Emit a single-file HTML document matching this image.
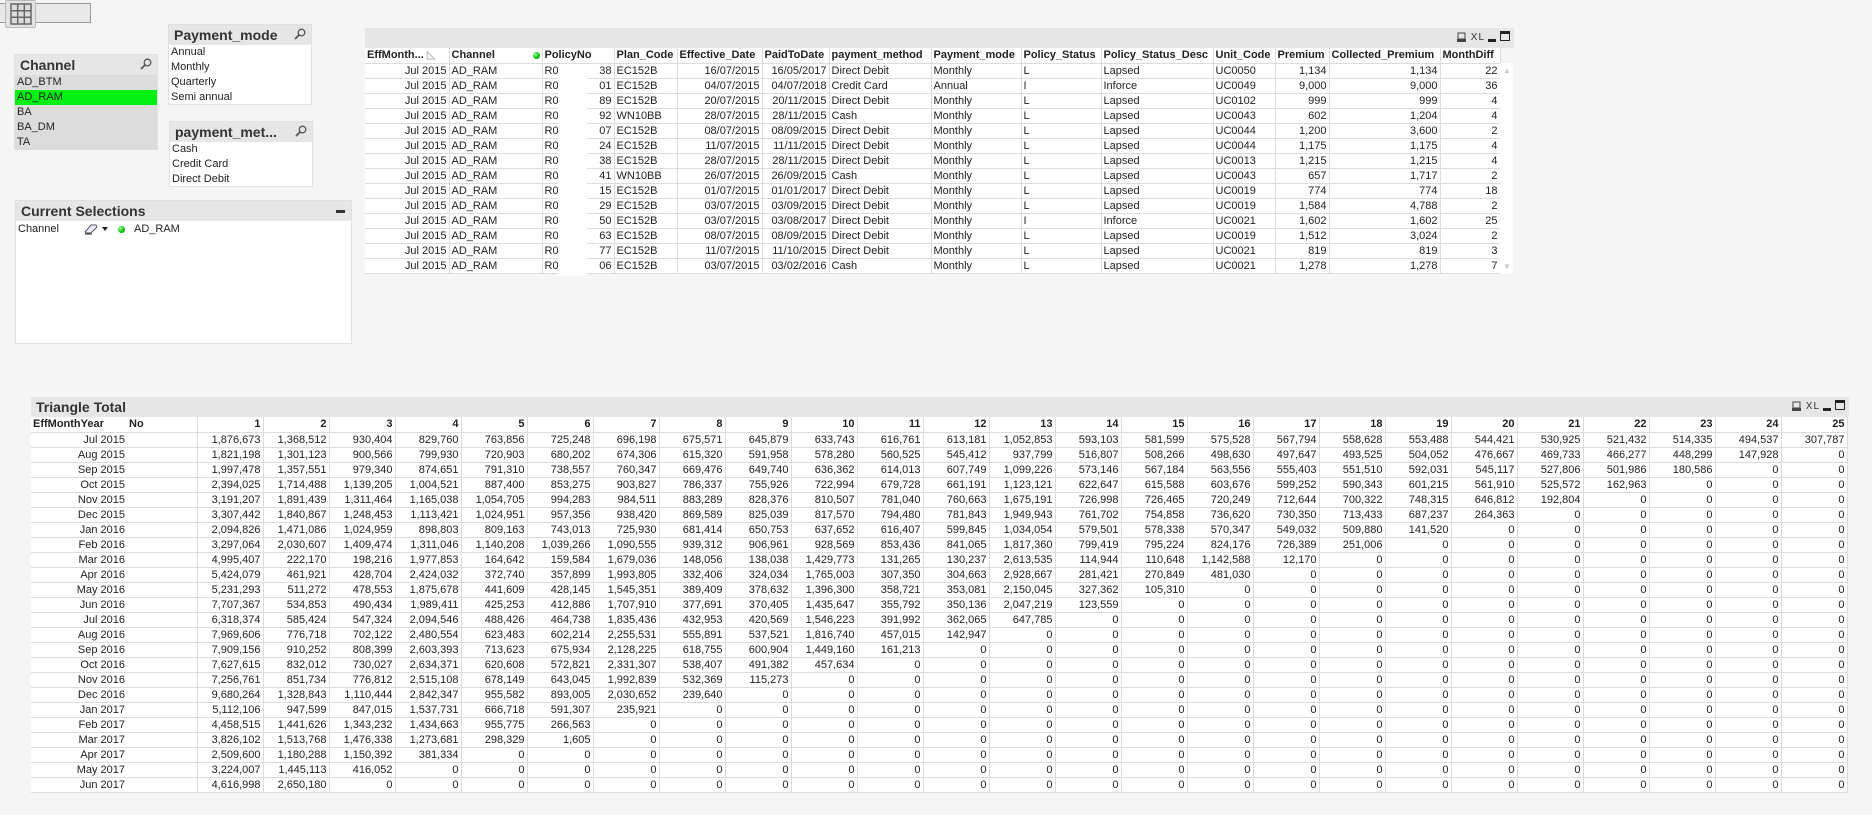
<!DOCTYPE html>
<html><head><meta charset="utf-8"><style>
*{box-sizing:border-box;margin:0;padding:0}
body{width:1872px;height:815px;background:#f5f5f5;font-family:"Liberation Sans",Tahoma,sans-serif;font-size:11px;color:#222;position:relative;overflow:hidden}
.abs{position:absolute}
.hdr{position:absolute;left:0;right:0;top:0;height:20px;background:#e6e6e6;font-weight:bold;font-size:14px;color:#333;padding:2px 5px;white-space:nowrap;overflow:hidden}
.lb{background:#fff;border:1px solid #e0e0e0}
.lb .it{height:15px;line-height:15px;padding-left:2px;white-space:nowrap}
.srch{position:absolute;right:5px;top:3px;width:12px;height:12px}
table{border-collapse:collapse;table-layout:fixed;position:absolute}
td{height:15px;line-height:14px;padding:0 2px;white-space:nowrap;overflow:hidden;border-right:1px solid #dcdcdc;border-bottom:1px solid #dcdcdc;background:#fff}
th{height:15px;line-height:14px;padding:0 2px;white-space:nowrap;overflow:hidden;font-weight:bold;text-align:left;border-right:1px solid #dcdcdc;border-bottom:1px solid #dcdcdc;background:#fff}
.tri td{text-align:right}
.tri td:first-child{text-align:right;border-right:none}
.tri th{text-align:right}
</style></head><body>

<div class="abs" style="left:0;top:3px;width:91px;height:20px;background:#e8e8e8;border:1px solid #9a9a9a;border-left:none"></div>
<div class="abs" style="left:5px;top:0;width:31px;height:28px;background:#e2e2e2;border:1px solid #bbb;border-radius:2px">
<svg width="22" height="22" style="position:absolute;left:4px;top:2px" viewBox="0 0 22 22"><rect x="1" y="1" width="20" height="20" fill="#ddd" stroke="#666" stroke-width="1.5"/><path d="M1 7.7H21M1 14.3H21M7.7 1V21M14.3 1V21" stroke="#666" stroke-width="1.5"/></svg>
</div>

<div class="abs lb" style="left:14px;top:54px;width:144px;height:96px;background:#dcdcdc">
<div class="hdr" style="background:#e6e6e6">Channel</div>
<svg class="srch" viewBox="0 0 12 12"><circle cx="7.5" cy="4.5" r="3.3" fill="none" stroke="#555" stroke-width="1.3"/><path d="M5 7L1 11" stroke="#555" stroke-width="1.8"/></svg>
<div style="position:absolute;top:20px;left:0;right:0">
<div class="it" style="background:#dcdcdc">AD_BTM</div>
<div class="it" style="background:#00f010">AD_RAM</div>
<div class="it" style="background:#dcdcdc">BA</div>
<div class="it" style="background:#dcdcdc">BA_DM</div>
<div class="it" style="background:#dcdcdc">TA</div>
</div></div>

<div class="abs lb" style="left:168px;top:24px;width:144px;height:81px">
<div class="hdr">Payment_mode</div>
<svg class="srch" viewBox="0 0 12 12"><circle cx="7.5" cy="4.5" r="3.3" fill="none" stroke="#555" stroke-width="1.3"/><path d="M5 7L1 11" stroke="#555" stroke-width="1.8"/></svg>
<div style="position:absolute;top:20px;left:0;right:0">
<div class="it">Annual</div><div class="it">Monthly</div><div class="it">Quarterly</div><div class="it">Semi annual</div>
</div></div>

<div class="abs lb" style="left:169px;top:121px;width:144px;height:66px">
<div class="hdr">payment_met...</div>
<svg class="srch" viewBox="0 0 12 12"><circle cx="7.5" cy="4.5" r="3.3" fill="none" stroke="#555" stroke-width="1.3"/><path d="M5 7L1 11" stroke="#555" stroke-width="1.8"/></svg>
<div style="position:absolute;top:20px;left:0;right:0">
<div class="it">Cash</div><div class="it">Credit Card</div><div class="it">Direct Debit</div>
</div></div>

<div class="abs lb" style="left:15px;top:200px;width:337px;height:144px">
<div class="hdr">Current Selections</div>
<div class="abs" style="right:6px;top:9px;width:9px;height:3px;background:#333"></div>
<div class="abs" style="left:2px;top:22px">Channel</div>
<svg class="abs" style="left:67px;top:22px" width="16" height="12" viewBox="0 0 16 12"><path d="M2 9L8 2L13 2L14 4L8 10L3 10Z" fill="#eef" stroke="#556" stroke-width="1"/><path d="M2 11H9" stroke="#333"/></svg>
<div class="abs" style="left:86px;top:26px;width:0;height:0;border-left:3px solid transparent;border-right:3px solid transparent;border-top:4px solid #222"></div>
<div class="abs" style="left:102px;top:25px;width:7px;height:7px;border-radius:50%;background:radial-gradient(circle at 35% 35%,#9f9,#0b0 60%,#070)"></div>
<div class="abs" style="left:118px;top:22px">AD_RAM</div>
</div>

<div class="abs" style="left:365px;top:28px;width:1149px;height:20px;background:#e6e6e6"></div>
<div class="abs" style="left:1456px;top:31px;font-size:10px;color:#333;letter-spacing:1px">
<svg width="11" height="11" viewBox="0 0 11 11" style="vertical-align:middle"><rect x="2" y="1" width="7" height="6" fill="none" stroke="#444"/><rect x="1" y="7" width="9" height="3" fill="#444"/></svg> XL
<span style="display:inline-block;width:8px;height:3px;background:#222;vertical-align:-2px"></span>
<span style="display:inline-block;width:10px;height:10px;border:1px solid #222;border-top:3px solid #222;vertical-align:-1px"></span>
</div>
<table class="abs" style="left:365px;top:48px;width:1135px">
<colgroup><col style="width:84px"><col style="width:93px"><col style="width:72px"><col style="width:63px"><col style="width:85px"><col style="width:67px"><col style="width:102px"><col style="width:90px"><col style="width:80px"><col style="width:112px"><col style="width:62px"><col style="width:54px"><col style="width:111px"><col style="width:60px"></colgroup>
<tr><th>EffMonth... <span style="color:#bbb">◺</span></th><th>Channel <span style="float:right;display:inline-block;width:7px;height:7px;margin-top:4px;border-radius:50%;background:radial-gradient(circle at 35% 35%,#9f9,#0b0 60%,#070)"></span></th><th>PolicyNo</th><th>Plan_Code</th><th>Effective_Date</th><th>PaidToDate</th><th>payment_method</th><th>Payment_mode</th><th>Policy_Status</th><th>Policy_Status_Desc</th><th>Unit_Code</th><th>Premium</th><th>Collected_Premium</th><th>MonthDiff</th></tr>
<tr><td align="right">Jul 2015</td><td>AD_RAM</td><td>R0<span style="float:right">38</span></td><td>EC152B</td><td align="right">16/07/2015</td><td align="right">16/05/2017</td><td>Direct Debit</td><td>Monthly</td><td>L</td><td>Lapsed</td><td>UC0050</td><td align="right">1,134</td><td align="right">1,134</td><td align="right">22</td></tr>
<tr><td align="right">Jul 2015</td><td>AD_RAM</td><td>R0<span style="float:right">01</span></td><td>EC152B</td><td align="right">04/07/2015</td><td align="right">04/07/2018</td><td>Credit Card</td><td>Annual</td><td>I</td><td>Inforce</td><td>UC0049</td><td align="right">9,000</td><td align="right">9,000</td><td align="right">36</td></tr>
<tr><td align="right">Jul 2015</td><td>AD_RAM</td><td>R0<span style="float:right">89</span></td><td>EC152B</td><td align="right">20/07/2015</td><td align="right">20/11/2015</td><td>Direct Debit</td><td>Monthly</td><td>L</td><td>Lapsed</td><td>UC0102</td><td align="right">999</td><td align="right">999</td><td align="right">4</td></tr>
<tr><td align="right">Jul 2015</td><td>AD_RAM</td><td>R0<span style="float:right">92</span></td><td>WN10BB</td><td align="right">28/07/2015</td><td align="right">28/11/2015</td><td>Cash</td><td>Monthly</td><td>L</td><td>Lapsed</td><td>UC0043</td><td align="right">602</td><td align="right">1,204</td><td align="right">4</td></tr>
<tr><td align="right">Jul 2015</td><td>AD_RAM</td><td>R0<span style="float:right">07</span></td><td>EC152B</td><td align="right">08/07/2015</td><td align="right">08/09/2015</td><td>Direct Debit</td><td>Monthly</td><td>L</td><td>Lapsed</td><td>UC0044</td><td align="right">1,200</td><td align="right">3,600</td><td align="right">2</td></tr>
<tr><td align="right">Jul 2015</td><td>AD_RAM</td><td>R0<span style="float:right">24</span></td><td>EC152B</td><td align="right">11/07/2015</td><td align="right">11/11/2015</td><td>Direct Debit</td><td>Monthly</td><td>L</td><td>Lapsed</td><td>UC0044</td><td align="right">1,175</td><td align="right">1,175</td><td align="right">4</td></tr>
<tr><td align="right">Jul 2015</td><td>AD_RAM</td><td>R0<span style="float:right">38</span></td><td>EC152B</td><td align="right">28/07/2015</td><td align="right">28/11/2015</td><td>Direct Debit</td><td>Monthly</td><td>L</td><td>Lapsed</td><td>UC0013</td><td align="right">1,215</td><td align="right">1,215</td><td align="right">4</td></tr>
<tr><td align="right">Jul 2015</td><td>AD_RAM</td><td>R0<span style="float:right">41</span></td><td>WN10BB</td><td align="right">26/07/2015</td><td align="right">26/09/2015</td><td>Cash</td><td>Monthly</td><td>L</td><td>Lapsed</td><td>UC0043</td><td align="right">657</td><td align="right">1,717</td><td align="right">2</td></tr>
<tr><td align="right">Jul 2015</td><td>AD_RAM</td><td>R0<span style="float:right">15</span></td><td>EC152B</td><td align="right">01/07/2015</td><td align="right">01/01/2017</td><td>Direct Debit</td><td>Monthly</td><td>L</td><td>Lapsed</td><td>UC0019</td><td align="right">774</td><td align="right">774</td><td align="right">18</td></tr>
<tr><td align="right">Jul 2015</td><td>AD_RAM</td><td>R0<span style="float:right">29</span></td><td>EC152B</td><td align="right">03/07/2015</td><td align="right">03/09/2015</td><td>Direct Debit</td><td>Monthly</td><td>L</td><td>Lapsed</td><td>UC0019</td><td align="right">1,584</td><td align="right">4,788</td><td align="right">2</td></tr>
<tr><td align="right">Jul 2015</td><td>AD_RAM</td><td>R0<span style="float:right">50</span></td><td>EC152B</td><td align="right">03/07/2015</td><td align="right">03/08/2017</td><td>Direct Debit</td><td>Monthly</td><td>I</td><td>Inforce</td><td>UC0021</td><td align="right">1,602</td><td align="right">1,602</td><td align="right">25</td></tr>
<tr><td align="right">Jul 2015</td><td>AD_RAM</td><td>R0<span style="float:right">63</span></td><td>EC152B</td><td align="right">08/07/2015</td><td align="right">08/09/2015</td><td>Direct Debit</td><td>Monthly</td><td>L</td><td>Lapsed</td><td>UC0019</td><td align="right">1,512</td><td align="right">3,024</td><td align="right">2</td></tr>
<tr><td align="right">Jul 2015</td><td>AD_RAM</td><td>R0<span style="float:right">77</span></td><td>EC152B</td><td align="right">11/07/2015</td><td align="right">11/10/2015</td><td>Direct Debit</td><td>Monthly</td><td>L</td><td>Lapsed</td><td>UC0021</td><td align="right">819</td><td align="right">819</td><td align="right">3</td></tr>
<tr><td align="right">Jul 2015</td><td>AD_RAM</td><td>R0<span style="float:right">06</span></td><td>EC152B</td><td align="right">03/07/2015</td><td align="right">03/02/2016</td><td>Cash</td><td>Monthly</td><td>L</td><td>Lapsed</td><td>UC0021</td><td align="right">1,278</td><td align="right">1,278</td><td align="right">7</td></tr>
</table>
<div class="abs" style="left:558px;top:64px;width:29px;height:212px;background:#fff"></div>
<div class="abs" style="left:1500px;top:63px;width:13px;height:211px;background:#fff"></div>
<div class="abs" style="left:1503px;top:66px;color:#ccc;font-size:8px">▲</div>
<div class="abs" style="left:1503px;top:262px;color:#ccc;font-size:8px">▼</div>

<div class="abs" style="left:31px;top:397px;width:1818px;height:20px;background:#e6e6e6;font-weight:bold;font-size:14px;color:#333;padding:2px 5px">Triangle Total</div>
<div class="abs" style="left:1791px;top:400px;font-size:10px;color:#333;letter-spacing:1px">
<svg width="11" height="11" viewBox="0 0 11 11" style="vertical-align:middle"><rect x="2" y="1" width="7" height="6" fill="none" stroke="#444"/><rect x="1" y="7" width="9" height="3" fill="#444"/></svg> XL
<span style="display:inline-block;width:8px;height:3px;background:#222;vertical-align:-2px"></span>
<span style="display:inline-block;width:10px;height:10px;border:1px solid #222;border-top:3px solid #222;vertical-align:-1px"></span>
</div>
<table class="tri" style="left:31px;top:417px;width:1816px">
<colgroup><col style="width:96px"><col style="width:70px"><col span="25" style="width:66px"></colgroup>
<tr><th style="text-align:left;border-right:none">EffMonthYear</th><th style="text-align:left">No</th><th>1</th><th>2</th><th>3</th><th>4</th><th>5</th><th>6</th><th>7</th><th>8</th><th>9</th><th>10</th><th>11</th><th>12</th><th>13</th><th>14</th><th>15</th><th>16</th><th>17</th><th>18</th><th>19</th><th>20</th><th>21</th><th>22</th><th>23</th><th>24</th><th>25</th></tr>
<tr><td>Jul 2015</td><td></td><td>1,876,673</td><td>1,368,512</td><td>930,404</td><td>829,760</td><td>763,856</td><td>725,248</td><td>696,198</td><td>675,571</td><td>645,879</td><td>633,743</td><td>616,761</td><td>613,181</td><td>1,052,853</td><td>593,103</td><td>581,599</td><td>575,528</td><td>567,794</td><td>558,628</td><td>553,488</td><td>544,421</td><td>530,925</td><td>521,432</td><td>514,335</td><td>494,537</td><td>307,787</td></tr>
<tr><td>Aug 2015</td><td></td><td>1,821,198</td><td>1,301,123</td><td>900,566</td><td>799,930</td><td>720,903</td><td>680,202</td><td>674,306</td><td>615,320</td><td>591,958</td><td>578,280</td><td>560,525</td><td>545,412</td><td>937,799</td><td>516,807</td><td>508,266</td><td>498,630</td><td>497,647</td><td>493,525</td><td>504,052</td><td>476,667</td><td>469,733</td><td>466,277</td><td>448,299</td><td>147,928</td><td>0</td></tr>
<tr><td>Sep 2015</td><td></td><td>1,997,478</td><td>1,357,551</td><td>979,340</td><td>874,651</td><td>791,310</td><td>738,557</td><td>760,347</td><td>669,476</td><td>649,740</td><td>636,362</td><td>614,013</td><td>607,749</td><td>1,099,226</td><td>573,146</td><td>567,184</td><td>563,556</td><td>555,403</td><td>551,510</td><td>592,031</td><td>545,117</td><td>527,806</td><td>501,986</td><td>180,586</td><td>0</td><td>0</td></tr>
<tr><td>Oct 2015</td><td></td><td>2,394,025</td><td>1,714,488</td><td>1,139,205</td><td>1,004,521</td><td>887,400</td><td>853,275</td><td>903,827</td><td>786,337</td><td>755,926</td><td>722,994</td><td>679,728</td><td>661,191</td><td>1,123,121</td><td>622,647</td><td>615,588</td><td>603,676</td><td>599,252</td><td>590,343</td><td>601,215</td><td>561,910</td><td>525,572</td><td>162,963</td><td>0</td><td>0</td><td>0</td></tr>
<tr><td>Nov 2015</td><td></td><td>3,191,207</td><td>1,891,439</td><td>1,311,464</td><td>1,165,038</td><td>1,054,705</td><td>994,283</td><td>984,511</td><td>883,289</td><td>828,376</td><td>810,507</td><td>781,040</td><td>760,663</td><td>1,675,191</td><td>726,998</td><td>726,465</td><td>720,249</td><td>712,644</td><td>700,322</td><td>748,315</td><td>646,812</td><td>192,804</td><td>0</td><td>0</td><td>0</td><td>0</td></tr>
<tr><td>Dec 2015</td><td></td><td>3,307,442</td><td>1,840,867</td><td>1,248,453</td><td>1,113,421</td><td>1,024,951</td><td>957,356</td><td>938,420</td><td>869,589</td><td>825,039</td><td>817,570</td><td>794,480</td><td>781,843</td><td>1,949,943</td><td>761,702</td><td>754,858</td><td>736,620</td><td>730,350</td><td>713,433</td><td>687,237</td><td>264,363</td><td>0</td><td>0</td><td>0</td><td>0</td><td>0</td></tr>
<tr><td>Jan 2016</td><td></td><td>2,094,826</td><td>1,471,086</td><td>1,024,959</td><td>898,803</td><td>809,163</td><td>743,013</td><td>725,930</td><td>681,414</td><td>650,753</td><td>637,652</td><td>616,407</td><td>599,845</td><td>1,034,054</td><td>579,501</td><td>578,338</td><td>570,347</td><td>549,032</td><td>509,880</td><td>141,520</td><td>0</td><td>0</td><td>0</td><td>0</td><td>0</td><td>0</td></tr>
<tr><td>Feb 2016</td><td></td><td>3,297,064</td><td>2,030,607</td><td>1,409,474</td><td>1,311,046</td><td>1,140,208</td><td>1,039,266</td><td>1,090,555</td><td>939,312</td><td>906,961</td><td>928,569</td><td>853,436</td><td>841,065</td><td>1,817,360</td><td>799,419</td><td>795,224</td><td>824,176</td><td>726,389</td><td>251,006</td><td>0</td><td>0</td><td>0</td><td>0</td><td>0</td><td>0</td><td>0</td></tr>
<tr><td>Mar 2016</td><td></td><td>4,995,407</td><td>222,170</td><td>198,216</td><td>1,977,853</td><td>164,642</td><td>159,584</td><td>1,679,036</td><td>148,056</td><td>138,038</td><td>1,429,773</td><td>131,265</td><td>130,237</td><td>2,613,535</td><td>114,944</td><td>110,648</td><td>1,142,588</td><td>12,170</td><td>0</td><td>0</td><td>0</td><td>0</td><td>0</td><td>0</td><td>0</td><td>0</td></tr>
<tr><td>Apr 2016</td><td></td><td>5,424,079</td><td>461,921</td><td>428,704</td><td>2,424,032</td><td>372,740</td><td>357,899</td><td>1,993,805</td><td>332,406</td><td>324,034</td><td>1,765,003</td><td>307,350</td><td>304,663</td><td>2,928,667</td><td>281,421</td><td>270,849</td><td>481,030</td><td>0</td><td>0</td><td>0</td><td>0</td><td>0</td><td>0</td><td>0</td><td>0</td><td>0</td></tr>
<tr><td>May 2016</td><td></td><td>5,231,293</td><td>511,272</td><td>478,553</td><td>1,875,678</td><td>441,609</td><td>428,145</td><td>1,545,351</td><td>389,409</td><td>378,632</td><td>1,396,300</td><td>358,721</td><td>353,081</td><td>2,150,045</td><td>327,362</td><td>105,310</td><td>0</td><td>0</td><td>0</td><td>0</td><td>0</td><td>0</td><td>0</td><td>0</td><td>0</td><td>0</td></tr>
<tr><td>Jun 2016</td><td></td><td>7,707,367</td><td>534,853</td><td>490,434</td><td>1,989,411</td><td>425,253</td><td>412,886</td><td>1,707,910</td><td>377,691</td><td>370,405</td><td>1,435,647</td><td>355,792</td><td>350,136</td><td>2,047,219</td><td>123,559</td><td>0</td><td>0</td><td>0</td><td>0</td><td>0</td><td>0</td><td>0</td><td>0</td><td>0</td><td>0</td><td>0</td></tr>
<tr><td>Jul 2016</td><td></td><td>6,318,374</td><td>585,424</td><td>547,324</td><td>2,094,546</td><td>488,426</td><td>464,738</td><td>1,835,436</td><td>432,953</td><td>420,569</td><td>1,546,223</td><td>391,992</td><td>362,065</td><td>647,785</td><td>0</td><td>0</td><td>0</td><td>0</td><td>0</td><td>0</td><td>0</td><td>0</td><td>0</td><td>0</td><td>0</td><td>0</td></tr>
<tr><td>Aug 2016</td><td></td><td>7,969,606</td><td>776,718</td><td>702,122</td><td>2,480,554</td><td>623,483</td><td>602,214</td><td>2,255,531</td><td>555,891</td><td>537,521</td><td>1,816,740</td><td>457,015</td><td>142,947</td><td>0</td><td>0</td><td>0</td><td>0</td><td>0</td><td>0</td><td>0</td><td>0</td><td>0</td><td>0</td><td>0</td><td>0</td><td>0</td></tr>
<tr><td>Sep 2016</td><td></td><td>7,909,156</td><td>910,252</td><td>808,399</td><td>2,603,393</td><td>713,623</td><td>675,934</td><td>2,128,225</td><td>618,755</td><td>600,904</td><td>1,449,160</td><td>161,213</td><td>0</td><td>0</td><td>0</td><td>0</td><td>0</td><td>0</td><td>0</td><td>0</td><td>0</td><td>0</td><td>0</td><td>0</td><td>0</td><td>0</td></tr>
<tr><td>Oct 2016</td><td></td><td>7,627,615</td><td>832,012</td><td>730,027</td><td>2,634,371</td><td>620,608</td><td>572,821</td><td>2,331,307</td><td>538,407</td><td>491,382</td><td>457,634</td><td>0</td><td>0</td><td>0</td><td>0</td><td>0</td><td>0</td><td>0</td><td>0</td><td>0</td><td>0</td><td>0</td><td>0</td><td>0</td><td>0</td><td>0</td></tr>
<tr><td>Nov 2016</td><td></td><td>7,256,761</td><td>851,734</td><td>776,812</td><td>2,515,108</td><td>678,149</td><td>643,045</td><td>1,992,839</td><td>532,369</td><td>115,273</td><td>0</td><td>0</td><td>0</td><td>0</td><td>0</td><td>0</td><td>0</td><td>0</td><td>0</td><td>0</td><td>0</td><td>0</td><td>0</td><td>0</td><td>0</td><td>0</td></tr>
<tr><td>Dec 2016</td><td></td><td>9,680,264</td><td>1,328,843</td><td>1,110,444</td><td>2,842,347</td><td>955,582</td><td>893,005</td><td>2,030,652</td><td>239,640</td><td>0</td><td>0</td><td>0</td><td>0</td><td>0</td><td>0</td><td>0</td><td>0</td><td>0</td><td>0</td><td>0</td><td>0</td><td>0</td><td>0</td><td>0</td><td>0</td><td>0</td></tr>
<tr><td>Jan 2017</td><td></td><td>5,112,106</td><td>947,599</td><td>847,015</td><td>1,537,731</td><td>666,718</td><td>591,307</td><td>235,921</td><td>0</td><td>0</td><td>0</td><td>0</td><td>0</td><td>0</td><td>0</td><td>0</td><td>0</td><td>0</td><td>0</td><td>0</td><td>0</td><td>0</td><td>0</td><td>0</td><td>0</td><td>0</td></tr>
<tr><td>Feb 2017</td><td></td><td>4,458,515</td><td>1,441,626</td><td>1,343,232</td><td>1,434,663</td><td>955,775</td><td>266,563</td><td>0</td><td>0</td><td>0</td><td>0</td><td>0</td><td>0</td><td>0</td><td>0</td><td>0</td><td>0</td><td>0</td><td>0</td><td>0</td><td>0</td><td>0</td><td>0</td><td>0</td><td>0</td><td>0</td></tr>
<tr><td>Mar 2017</td><td></td><td>3,826,102</td><td>1,513,768</td><td>1,476,338</td><td>1,273,681</td><td>298,329</td><td>1,605</td><td>0</td><td>0</td><td>0</td><td>0</td><td>0</td><td>0</td><td>0</td><td>0</td><td>0</td><td>0</td><td>0</td><td>0</td><td>0</td><td>0</td><td>0</td><td>0</td><td>0</td><td>0</td><td>0</td></tr>
<tr><td>Apr 2017</td><td></td><td>2,509,600</td><td>1,180,288</td><td>1,150,392</td><td>381,334</td><td>0</td><td>0</td><td>0</td><td>0</td><td>0</td><td>0</td><td>0</td><td>0</td><td>0</td><td>0</td><td>0</td><td>0</td><td>0</td><td>0</td><td>0</td><td>0</td><td>0</td><td>0</td><td>0</td><td>0</td><td>0</td></tr>
<tr><td>May 2017</td><td></td><td>3,224,007</td><td>1,445,113</td><td>416,052</td><td>0</td><td>0</td><td>0</td><td>0</td><td>0</td><td>0</td><td>0</td><td>0</td><td>0</td><td>0</td><td>0</td><td>0</td><td>0</td><td>0</td><td>0</td><td>0</td><td>0</td><td>0</td><td>0</td><td>0</td><td>0</td><td>0</td></tr>
<tr><td>Jun 2017</td><td></td><td>4,616,998</td><td>2,650,180</td><td>0</td><td>0</td><td>0</td><td>0</td><td>0</td><td>0</td><td>0</td><td>0</td><td>0</td><td>0</td><td>0</td><td>0</td><td>0</td><td>0</td><td>0</td><td>0</td><td>0</td><td>0</td><td>0</td><td>0</td><td>0</td><td>0</td><td>0</td></tr>
</table>
</body></html>
